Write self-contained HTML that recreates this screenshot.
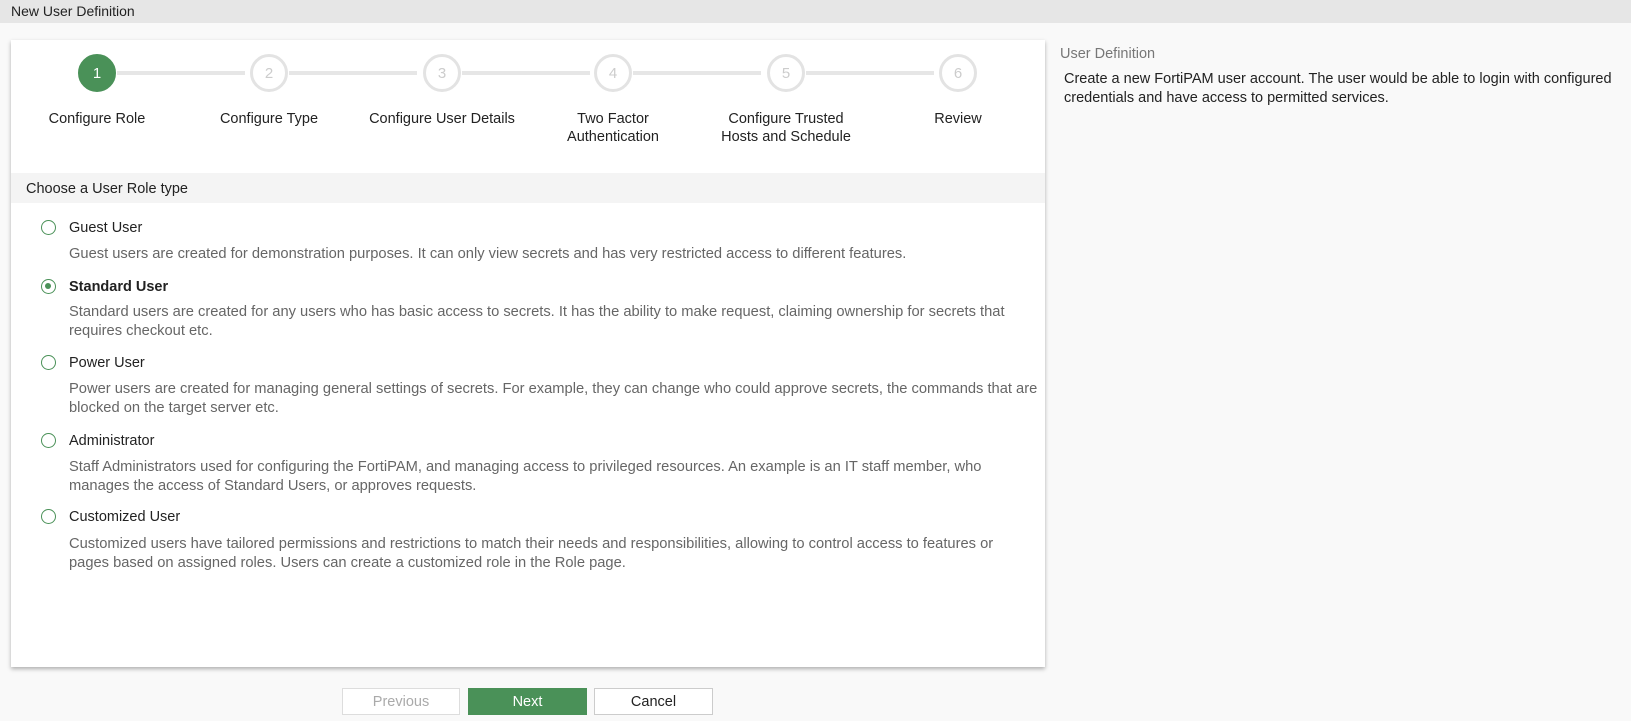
<!DOCTYPE html>
<html><head><meta charset="utf-8"><style>
*{box-sizing:border-box;margin:0;padding:0}
body{width:1631px;height:721px;background:#f9f9f9;font-family:"Liberation Sans",sans-serif;color:#333;position:relative;overflow:hidden;font-size:14.5px}
.hdr{position:absolute;left:0;top:0;width:1631px;height:23px;background:#e6e6e6;font-size:14px;padding:3px 0 0 11px;color:#222}
.card{position:absolute;left:11px;top:40px;width:1034px;height:627px;background:#fff;box-shadow:0 2px 4px rgba(0,0,0,.3)}
.ab{position:absolute}
.circ{position:absolute;width:38px;height:38px;border-radius:50%;border:3px solid #e3e3e3;background:#fff;color:#ccc;text-align:center;line-height:34px;font-size:15px}
.circ.on{background:#4a9158;border-color:#4a9158;color:#fff}
.line{position:absolute;height:4px;background:#e6e6e6;top:31px}
.lbl{position:absolute;width:180px;text-align:center;font-size:14.5px;line-height:18px;color:#222}
.band{position:absolute;left:0;top:133px;width:1034px;height:30px;background:#f4f4f4;padding:8px 0 0 15px;font-size:14.5px;color:#222}
.radio{position:absolute;left:30px;width:15px;height:15px;border:1.5px solid #4a9158;border-radius:50%}
.radio.on::after{content:"";position:absolute;left:3px;top:3px;width:6px;height:6px;border-radius:50%;background:#4a9158}
.t{position:absolute;left:58px;font-size:14.5px;color:#222}
.d{position:absolute;left:58px;font-size:14.7px;color:#666;line-height:19px;width:980px}
.btn{position:absolute;top:688px;height:27px;text-align:center;line-height:27px;font-size:14.5px;border:1px solid #ccc;background:#fff}
</style></head><body>
<div class="hdr">New User Definition</div>
<div class="card">
<div class="line" style="left:106px;width:128px"></div>
<div class="line" style="left:278px;width:128px"></div>
<div class="line" style="left:451px;width:128px"></div>
<div class="line" style="left:622px;width:128px"></div>
<div class="line" style="left:795px;width:128px"></div>
<div class="circ on" style="left:67px;top:14px">1</div>
<div class="circ" style="left:239px;top:14px">2</div>
<div class="circ" style="left:412px;top:14px">3</div>
<div class="circ" style="left:583px;top:14px">4</div>
<div class="circ" style="left:756px;top:14px">5</div>
<div class="circ" style="left:928px;top:14px">6</div>
<div class="lbl" style="left:-4px;top:70px">Configure Role</div>
<div class="lbl" style="left:168px;top:70px">Configure Type</div>
<div class="lbl" style="left:341px;top:70px">Configure User Details</div>
<div class="lbl" style="left:512px;top:70px">Two Factor<br>Authentication</div>
<div class="lbl" style="left:685px;top:70px">Configure Trusted<br>Hosts and Schedule</div>
<div class="lbl" style="left:857px;top:70px">Review</div>
<div class="band">Choose a User Role type</div>
<div class="radio" style="top:180px"></div><div class="t" style="top:180px">Guest User</div>
<div class="d" style="top:205px">Guest users are created for demonstration purposes. It can only view secrets and has very restricted access to different features.</div>
<div class="radio on" style="top:239px"></div><div class="t" style="top:239px;font-weight:bold">Standard User</div>
<div class="d" style="top:263px">Standard users are created for any users who has basic access to secrets. It has the ability to make request, claiming ownership for secrets that<br>requires checkout etc.</div>
<div class="radio" style="top:315px"></div><div class="t" style="top:315px">Power User</div>
<div class="d" style="top:340px">Power users are created for managing general settings of secrets. For example, they can change who could approve secrets, the commands that are<br>blocked on the target server etc.</div>
<div class="radio" style="top:393px"></div><div class="t" style="top:393px">Administrator</div>
<div class="d" style="top:418px">Staff Administrators used for configuring the FortiPAM, and managing access to privileged resources. An example is an IT staff member, who<br>manages the access of Standard Users, or approves requests.</div>
<div class="radio" style="top:469px"></div><div class="t" style="top:469px">Customized User</div>
<div class="d" style="top:495px">Customized users have tailored permissions and restrictions to match their needs and responsibilities, allowing to control access to features or<br>pages based on assigned roles. Users can create a customized role in the Role page.</div>
</div>
<div class="btn" style="left:342px;width:118px;color:#aaa;border-color:#ddd">Previous</div>
<div class="btn" style="left:468px;width:119px;background:#4a9158;border-color:#4a9158;color:#fff">Next</div>
<div class="btn" style="left:594px;width:119px;color:#222">Cancel</div>
<div class="ab" style="left:1060px;top:46px;color:#777;font-size:14.5px">User Definition</div>
<div class="ab" style="left:1064px;top:70px;color:#222;font-size:14.5px;line-height:19px;width:560px">Create a new FortiPAM user account. The user would be able to login with configured credentials and have access to permitted services.</div>
</body></html>
